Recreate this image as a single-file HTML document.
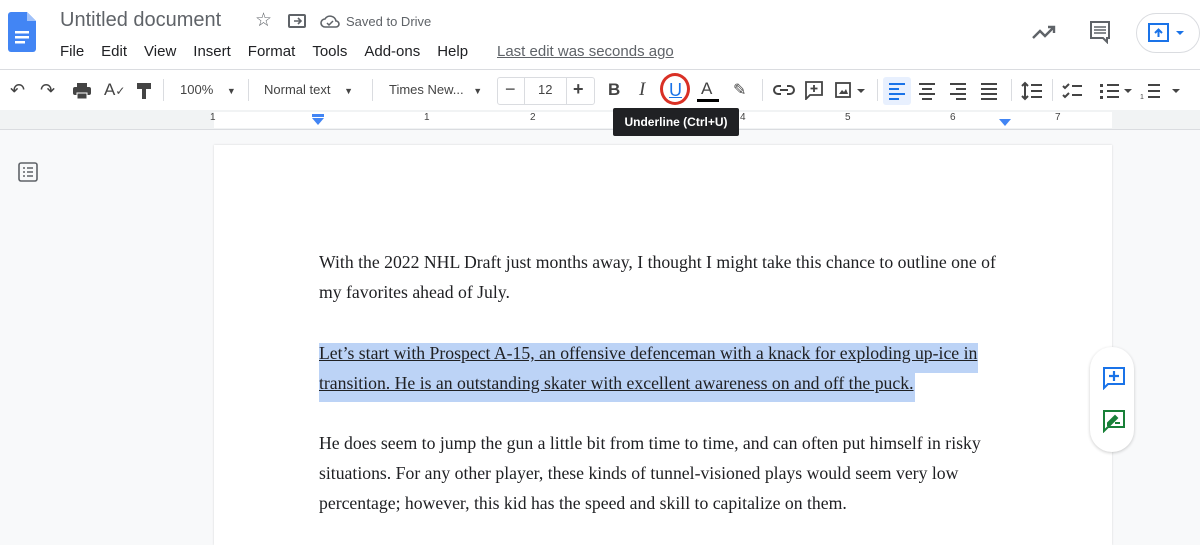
<!DOCTYPE html><html><head><style>
body{margin:0;width:1200px;height:534px;overflow:hidden;background:#f8f9fa;font-family:"Liberation Sans",sans-serif;position:relative}
.a{position:absolute}
.top{position:absolute;left:0;top:0;width:1200px;height:69px;background:#fff;border-bottom:1px solid #dadce0}
.tb{position:absolute;left:0;top:70px;width:1200px;height:41px;background:#fff;border-bottom:1px solid #dadce0}
.menu span{margin-right:17px}
.ic{position:absolute;color:#444;font-size:18px}
.sep{position:absolute;top:79px;width:1px;height:22px;background:#dadce0}
.txt{position:absolute;left:319px;font-family:"Liberation Serif",serif;font-size:17.7px;color:#202124;line-height:30px;white-space:nowrap}
</style></head><body>
<div class="top"></div>
<svg class="a" style="left:8px;top:12px" width="28" height="40" viewBox="0 0 28 40"><path d="M3 0h16l9 9v28a3 3 0 0 1-3 3H3a3 3 0 0 1-3-3V3a3 3 0 0 1 3-3z" fill="#4285f4"/><path d="M19 0v9h9z" fill="#a1c2fa"/><rect x="7" y="19" width="14" height="2.5" fill="#fff"/><rect x="7" y="24" width="14" height="2.5" fill="#fff"/><rect x="7" y="29" width="10" height="2.5" fill="#fff"/></svg>
<div class="a" style="left:60px;top:9px;font-size:20px;color:#5f6368">Untitled document</div>
<div class="a" style="left:255px;top:9px;font-size:19px;color:#5f6368">☆</div>
<svg class="a" style="left:288px;top:13px" width="18" height="15"><rect x="1" y="2" width="16" height="12" rx="1" fill="none" stroke="#5f6368" stroke-width="2"/><path d="M6 8h6M10 5l3 3-3 3" stroke="#5f6368" stroke-width="1.6" fill="none"/></svg>
<svg class="a" style="left:320px;top:14px" width="20" height="14"><path d="M5 13a4 4 0 0 1 0-8 6 6 0 0 1 11 2 3 3 0 0 1 0 6z" fill="none" stroke="#5f6368" stroke-width="1.6"/><path d="M7 9l2 2 4-4" stroke="#5f6368" stroke-width="1.5" fill="none"/></svg>
<div class="a" style="left:346px;top:14px;font-size:13px;color:#5f6368">Saved to Drive</div>
<div class="a menu" style="left:60px;top:43px;font-size:15px;color:#202124;white-space:nowrap"><span>File</span><span>Edit</span><span>View</span><span>Insert</span><span>Format</span><span>Tools</span><span>Add-ons</span><span>Help</span></div>
<div class="a" style="left:497px;top:43px;font-size:15px;color:#5f6368;text-decoration:underline">Last edit was seconds ago</div>
<svg class="a" style="left:1032px;top:24px" width="26" height="16"><path d="M1 14l7-7 5 5 9-9M16 3h6v6" stroke="#5f6368" stroke-width="2.4" fill="none"/></svg>
<svg class="a" style="left:1089px;top:20px" width="22" height="24"><path d="M2 2h18v16h-2v4l-4-4H2z" fill="none" stroke="#5f6368" stroke-width="2"/><path d="M5 7h12M5 10h12M5 13h12" stroke="#5f6368" stroke-width="1.6"/></svg>
<div class="a" style="left:1136px;top:13px;width:62px;height:38px;border:1px solid #dadce0;border-radius:20px;background:#fff"></div>
<svg class="a" style="left:1148px;top:23px" width="40" height="20"><rect x="1" y="1" width="19" height="17" fill="none" stroke="#1a73e8" stroke-width="2"/><path d="M10.5 14V7M7 10l3.5-3.5L14 10" stroke="#1a73e8" stroke-width="2" fill="none"/><path d="M28 8h8l-4 4z" fill="#1a73e8"/></svg>
<div class="tb"></div>
<div class="a" style="left:0;top:110px;width:1200px;height:19px;background:#f1f3f4;border-bottom:1px solid #dadce0"></div>
<div class="a" style="left:214px;top:112px;width:898px;height:16px;background:#fff"></div>
<div class="a" style="left:0;top:112px;width:1200px;font-size:10px;color:#444">
<span class="a" style="left:210px">1</span><span class="a" style="left:424px">1</span><span class="a" style="left:530px">2</span><span class="a" style="left:740px">4</span><span class="a" style="left:845px">5</span><span class="a" style="left:950px">6</span><span class="a" style="left:1055px">7</span></div>
<svg class="a" style="left:311px;top:114px" width="14" height="12"><rect x="1" y="0" width="12" height="3" fill="#4285f4"/><path d="M1 4h12l-6 7z" fill="#4285f4"/></svg>
<svg class="a" style="left:998px;top:119px" width="14" height="8"><path d="M1 0h12l-6 7z" fill="#4285f4"/></svg>
<div class="ic" style="left:10px;top:80px">↶</div><div class="ic" style="left:40px;top:80px">↷</div>
<svg class="a" style="left:72px;top:82px" width="20" height="18"><rect x="5" y="1" width="10" height="4" fill="#444"/><rect x="1" y="5" width="18" height="8" rx="2" fill="#444"/><rect x="5" y="11" width="10" height="6" fill="#444" stroke="#fff"/></svg>
<div class="ic" style="left:104px;top:80px;font-size:17px">A<span style="font-size:12px">✓</span></div>
<svg class="a" style="left:136px;top:82px" width="16" height="18"><rect x="1" y="1" width="14" height="6" fill="#444"/><rect x="6" y="7" width="4" height="10" fill="#444"/></svg>
<div class="sep" style="left:163px"></div>
<div class="a" style="left:180px;top:82px;font-size:13px;color:#444">100% <span style="font-size:9px;margin-left:10px">▼</span></div>
<div class="sep" style="left:248px"></div>
<div class="a" style="left:264px;top:82px;font-size:13px;color:#444">Normal text <span style="font-size:9px;margin-left:10px">▼</span></div>
<div class="sep" style="left:372px"></div>
<div class="a" style="left:389px;top:82px;font-size:13px;color:#444">Times New... <span style="font-size:9px;margin-left:6px">▼</span></div>
<div class="a" style="left:497px;top:77px;width:96px;height:26px;border:1px solid #dadce0;border-radius:3px"></div>
<div class="a" style="left:524px;top:77px;width:1px;height:28px;background:#dadce0"></div><div class="a" style="left:566px;top:77px;width:1px;height:28px;background:#dadce0"></div>
<div class="a" style="left:505px;top:79px;font-size:18px;color:#444">−</div>
<div class="a" style="left:538px;top:82px;font-size:13px;color:#444">12</div>
<div class="a" style="left:573px;top:79px;font-size:18px;color:#444;font-weight:bold">+</div>
<div class="a" style="left:608px;top:80px;font-size:17px;color:#444;font-weight:bold">B</div>
<div class="a" style="left:639px;top:79px;font-size:19px;color:#444;font-style:italic;font-family:'Liberation Serif',serif">I</div>
<div class="a" style="left:669px;top:80px;font-size:18px;color:#1a73e8;text-decoration:underline">U</div>
<div class="a" style="left:660px;top:73px;width:30px;height:32px;border:3px solid #d93025;border-radius:50%;box-sizing:border-box"></div>
<div class="a" style="left:701px;top:79px;font-size:17px;color:#444">A</div>
<div class="a" style="left:697px;top:99px;width:22px;height:3px;background:#000"></div>
<div class="a" style="left:733px;top:80px;font-size:16px;color:#444">✎</div>
<div class="sep" style="left:762px"></div>
<svg class="a" style="left:773px;top:84px" width="22" height="12"><path d="M8 2H5a4 4 0 0 0 0 8h3M14 2h3a4 4 0 0 1 0 8h-3M7 6h8" stroke="#444" stroke-width="2" fill="none"/></svg>
<svg class="a" style="left:805px;top:81px" width="18" height="19"><path d="M1 1h16v13H5l-4 4z" fill="none" stroke="#444" stroke-width="1.8"/><path d="M9 4v7M5.5 7.5h7" stroke="#444" stroke-width="1.8"/></svg>
<svg class="a" style="left:835px;top:82px" width="34" height="16"><rect x="1" y="1" width="14" height="14" fill="none" stroke="#444" stroke-width="1.8"/><path d="M4 12l3-4 2 2 2-3 2 5z" fill="#444"/><path d="M22 7h8l-4 4z" fill="#444"/></svg>
<div class="sep" style="left:877px"></div>
<div class="a" style="left:883px;top:77px;width:28px;height:28px;background:#e8f0fe;border-radius:3px"></div>
<svg class="a" style="left:888px;top:82px" width="140" height="18"><g stroke-width="2"><path d="M1 2h16M1 7h10M1 12h16M1 17h10" stroke="#1a73e8"/><path d="M31 2h16M34 7h10M31 12h16M34 17h10" stroke="#444"/><path d="M62 2h16M68 7h10M62 12h16M68 17h10" stroke="#444"/><path d="M93 2h16M93 7h16M93 12h16M93 17h16" stroke="#444"/></g></svg>
<div class="sep" style="left:1011px"></div>
<svg class="a" style="left:1020px;top:81px" width="24" height="20"><path d="M5 2v16M2 5l3-3 3 3M2 15l3 3 3-3M11 4h11M11 10h11M11 16h11" stroke="#444" stroke-width="2" fill="none"/></svg>
<div class="sep" style="left:1052px"></div>
<svg class="a" style="left:1062px;top:82px" width="140" height="18"><g stroke="#444" stroke-width="2" fill="none"><path d="M1 4l2 2 4-4M1 13l2 2 4-4M10 4h10M10 13h10"/><path d="M45 3h12M45 9h12M45 15h12"/><path d="M86 3h12M86 9h12M86 15h12"/></g><g fill="#444"><rect x="38" y="2" width="3" height="3"/><rect x="38" y="8" width="3" height="3"/><rect x="38" y="14" width="3" height="3"/><path d="M62 7h8l-4 4zM110 7h8l-4 4z"/></g><text x="78" y="17" font-size="7" fill="#444">1</text></svg>
<div class="a" style="left:613px;top:108px;width:126px;height:28px;background:#202124;border-radius:2px;color:#fff;font-size:12px;font-weight:bold;line-height:28px;text-align:center">Underline (Ctrl+U)</div>
<div class="a" style="left:672px;top:102px;width:0;height:0;border:6px solid transparent;border-bottom-color:#202124"></div>
<svg class="a" style="left:18px;top:162px" width="20" height="20"><rect x="1" y="1" width="18" height="18" rx="2" fill="none" stroke="#5f6368" stroke-width="1.6"/><path d="M5 6h2M9 6h6M5 10h2M9 10h6M5 14h2M9 14h6" stroke="#5f6368" stroke-width="1.6"/></svg>
<div class="a" style="left:214px;top:145px;width:898px;height:400px;background:#fff;box-shadow:0 0 2px rgba(0,0,0,.15)"></div>
<div class="txt" style="top:247px">With the 2022 NHL Draft just months away, I thought I might take this chance to outline one of<br>my favorites ahead of July.</div>
<div class="a" style="left:319px;top:343px;width:659px;height:30px;background:#bcd3f6"></div>
<div class="a" style="left:319px;top:373px;width:596px;height:29px;background:#bcd3f6"></div>
<div class="txt" style="top:338px;text-decoration:underline">Let’s start with Prospect A-15, an offensive defenceman with a knack for exploding up-ice in<br>transition. He is an outstanding skater with excellent awareness on and off the puck.</div>
<div class="txt" style="top:428px">He does seem to jump the gun a little bit from time to time, and can often put himself in risky<br>situations. For any other player, these kinds of tunnel-visioned plays would seem very low<br>percentage; however, this kid has the speed and skill to capitalize on them.</div>
<div class="a" style="left:1090px;top:347px;width:44px;height:105px;background:#fff;border-radius:22px;box-shadow:0 1px 3px rgba(0,0,0,.2)"></div>
<svg class="a" style="left:1102px;top:366px" width="24" height="24"><path d="M2 2h20v16H6l-4 4z" fill="none" stroke="#1a73e8" stroke-width="2"/><path d="M12 5v10M7 10h10" stroke="#1a73e8" stroke-width="2.2"/></svg>
<svg class="a" style="left:1102px;top:409px" width="24" height="24"><path d="M2 2h20v16H6l-4 4z" fill="none" stroke="#188038" stroke-width="2"/><path d="M6 14l7-7 2 2-7 7H6zM13 14h5" stroke="#188038" stroke-width="2" fill="#188038"/></svg>
</body></html>
